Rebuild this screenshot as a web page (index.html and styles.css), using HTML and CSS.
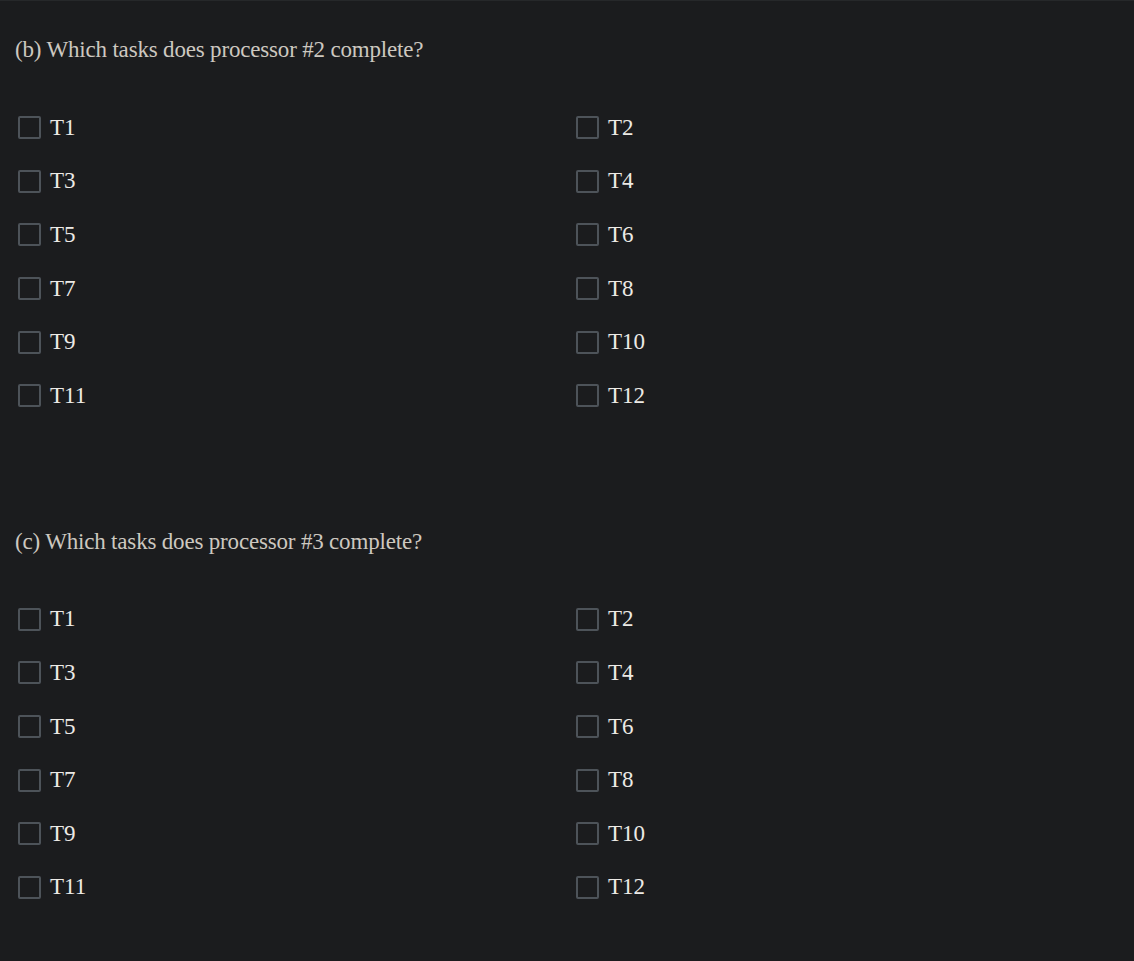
FILE: index.html
```html
<!DOCTYPE html>
<html>
<head>
<meta charset="utf-8">
<link rel="stylesheet" href="styles.css">
</head>
<body>
<div class="page">
  <section class="block">
    <p class="question">(b) Which tasks does processor #2 complete?</p>
    <div class="options">
      <label class="opt"><span class="box"></span><span class="txt">T1</span></label>
      <label class="opt"><span class="box"></span><span class="txt">T2</span></label>
      <label class="opt"><span class="box"></span><span class="txt">T3</span></label>
      <label class="opt"><span class="box"></span><span class="txt">T4</span></label>
      <label class="opt"><span class="box"></span><span class="txt">T5</span></label>
      <label class="opt"><span class="box"></span><span class="txt">T6</span></label>
      <label class="opt"><span class="box"></span><span class="txt">T7</span></label>
      <label class="opt"><span class="box"></span><span class="txt">T8</span></label>
      <label class="opt"><span class="box"></span><span class="txt">T9</span></label>
      <label class="opt"><span class="box"></span><span class="txt">T10</span></label>
      <label class="opt"><span class="box"></span><span class="txt">T11</span></label>
      <label class="opt"><span class="box"></span><span class="txt">T12</span></label>
    </div>
  </section>
  <section class="block">
    <p class="question">(c) Which tasks does processor #3 complete?</p>
    <div class="options">
      <label class="opt"><span class="box"></span><span class="txt">T1</span></label>
      <label class="opt"><span class="box"></span><span class="txt">T2</span></label>
      <label class="opt"><span class="box"></span><span class="txt">T3</span></label>
      <label class="opt"><span class="box"></span><span class="txt">T4</span></label>
      <label class="opt"><span class="box"></span><span class="txt">T5</span></label>
      <label class="opt"><span class="box"></span><span class="txt">T6</span></label>
      <label class="opt"><span class="box"></span><span class="txt">T7</span></label>
      <label class="opt"><span class="box"></span><span class="txt">T8</span></label>
      <label class="opt"><span class="box"></span><span class="txt">T9</span></label>
      <label class="opt"><span class="box"></span><span class="txt">T10</span></label>
      <label class="opt"><span class="box"></span><span class="txt">T11</span></label>
      <label class="opt"><span class="box"></span><span class="txt">T12</span></label>
    </div>
  </section>
</div>
</body>
</html>
```
FILE: styles.css
```css
html, body {
  margin: 0;
  padding: 0;
  background: #1b1c1e;
}
body {
  border-top: 1px solid #26282a;
  min-height: 960px;
  font-family: "Liberation Serif", "Times New Roman", serif;
}
.page {
  padding: 0 4px 0 14px;
}
.block {
  padding-top: 34px;
  padding-bottom: 70px;
}
.question {
  margin: 0;
  height: 30px;
  line-height: 30px;
  font-size: 23px;
  color: #cdc8c0;
  letter-spacing: -0.18px;
  padding-left: 1px;
}
.options {
  margin-top: 36px;
  display: grid;
  grid-template-columns: 558px 558px;
  grid-auto-rows: 53.6px;
}
.opt {
  display: flex;
  align-items: center;
  gap: 9px;
  padding-left: 4px;
}
.box {
  width: 19px;
  height: 19px;
  border: 2px solid #4d5359;
  border-radius: 2px;
  flex: none;
}
.txt {
  font-size: 23px;
  color: #eceae6;
}
```
